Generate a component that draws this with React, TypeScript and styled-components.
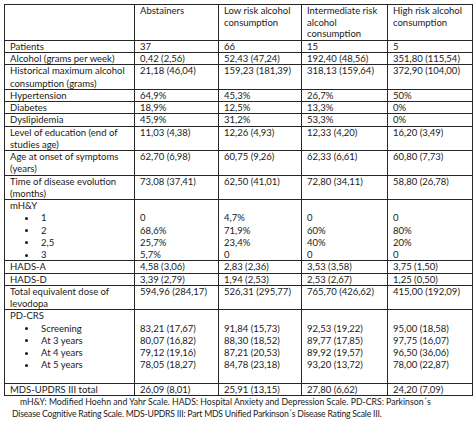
import React from "react";
import styled, { createGlobalStyle } from "styled-components";

type Row = {
  label: string;
  bullets?: string[];
  trailingBlank?: boolean;
  values: string[][];
};

const headers = [
  "Abstainers",
  "Low risk alcohol consumption",
  "Intermediate risk alcohol consumption",
  "High risk alcohol consumption",
];

const rows: Row[] = [
  { label: "Patients", values: [["37"], ["66"], ["15"], ["5"]] },
  {
    label: "Alcohol (grams per week)",
    values: [["0,42 (2,56)"], ["52,43 (47,24)"], ["192,40 (48,56)"], ["351,80 (115,54)"]],
  },
  {
    label: "Historical maximum alcohol consumption (grams)",
    values: [["21,18 (46,04)"], ["159,23 (181,39)"], ["318,13 (159,64)"], ["372,90 (104,00)"]],
  },
  { label: "Hypertension", values: [["64,9%"], ["45,3%"], ["26,7%"], ["50%"]] },
  { label: "Diabetes", values: [["18,9%"], ["12,5%"], ["13,3%"], ["0%"]] },
  { label: "Dyslipidemia", values: [["45,9%"], ["31,2%"], ["53,3%"], ["0%"]] },
  {
    label: "Level of education (end of studies age)",
    values: [["11,03 (4,38)"], ["12,26 (4,93)"], ["12,33 (4,20)"], ["16,20 (3,49)"]],
  },
  {
    label: "Age at onset of symptoms (years)",
    values: [["62,70 (6,98)"], ["60,75 (9,26)"], ["62,33 (6,61)"], ["60,80 (7,73)"]],
  },
  {
    label: "Time of disease evolution (months)",
    values: [["73,08 (37,41)"], ["62,50 (41,01)"], ["72,80 (34,11)"], ["58,80 (26,78)"]],
  },
  {
    label: "mH&Y",
    bullets: ["1", "2", "2,5", "3"],
    values: [
      ["", "0", "68,6%", "25,7%", "5,7%"],
      ["", "4,7%", "71,9%", "23,4%", "0"],
      ["", "0", "60%", "40%", "0"],
      ["", "0", "80%", "20%", "0"],
    ],
  },
  {
    label: "HADS-A",
    values: [["4,58 (3,06)"], ["2,83 (2,36)"], ["3,53 (3,58)"], ["3,75 (1,50)"]],
  },
  {
    label: "HADS-D",
    values: [["3,39 (2,79)"], ["1,94 (2,53)"], ["2,53 (2,67)"], ["1,25 (0,50)"]],
  },
  {
    label: "Total equivalent dose of levodopa",
    values: [["594,96 (284,17)"], ["526,31 (295,77)"], ["765,70 (426,62)"], ["415,00 (192,09)"]],
  },
  {
    label: "PD-CRS",
    bullets: ["Screening", "At 3 years", "At 4 years", "At 5 years"],
    trailingBlank: true,
    values: [
      ["", "83,21 (17,67)", "80,07 (16,82)", "79,12 (19,16)", "78,05 (18,27)", ""],
      ["", "91,84 (15,73)", "88,30 (18,52)", "87,21 (20,53)", "84,78 (23,18)", ""],
      ["", "92,53 (19,22)", "89,77 (17,85)", "89,92 (19,57)", "93,20 (13,72)", ""],
      ["", "95,00 (18,58)", "97,75 (16,07)", "96,50 (36,06)", "78,00 (22,87)", ""],
    ],
  },
  {
    label: "MDS-UPDRS III total",
    values: [["26,09 (8,01)"], ["25,91 (13,15)"], ["27,80 (6,62)"], ["24,20 (7,09)"]],
  },
];

const widths = [130, 84, 83, 86, 85];

const App = () => {
  return (
    <Page>
      <GlobalStyle />
      <Table>
        <colgroup>
          {widths.map((w, i) => (
            <Col key={i} $w={w} />
          ))}
        </colgroup>
        <tbody>
          <tr>
            <HeadCell />
            {headers.map((h) => (
              <HeadCell key={h}>{h}</HeadCell>
            ))}
          </tr>
          {rows.map((row) => (
            <tr key={row.label}>
              <Cell>
                <Label>{row.label}</Label>
                {row.bullets && (
                  <BulletList>
                    {row.bullets.map((b) => (
                      <Bullet key={b}>{b}</Bullet>
                    ))}
                  </BulletList>
                )}
                {row.trailingBlank && <Line>&nbsp;</Line>}
              </Cell>
              {row.values.map((lines, i) => (
                <Cell key={i}>
                  {lines.map((l, j) => (
                    <Line key={j}>{l || "\u00a0"}</Line>
                  ))}
                </Cell>
              ))}
            </tr>
          ))}
        </tbody>
      </Table>
      <Footnote>
        <NoteLine $indent={8} $spacing={0}>
          mH&amp;Y: Modified Hoehn and Yahr Scale. HADS: Hospital Anxiety and Depression Scale. PD-CRS: Parkinson´s
        </NoteLine>
        <NoteLine $indent={0} $spacing={-0.22}>
          Disease Cognitive Rating Scale. MDS-UPDRS III: Part MDS Unified Parkinson´s Disease Rating Scale III.
        </NoteLine>
      </Footnote>
    </Page>
  );
};

export default App;

const GlobalStyle = createGlobalStyle`
  body {
    margin: 0;
    background: #ffffff;
    font-family: Lato, "Open Sans", sans-serif;
    color: #1a1a1a;
  }
`;

const Page = styled.div`
  width: 474px;
  height: 422px;
  padding: 4px 0 0 4px;
  box-sizing: border-box;
  overflow: hidden;
`;

const Table = styled.table`
  border-collapse: collapse;
  table-layout: fixed;
  width: 468px;
  font-size: 9.5px;
  line-height: 12.25px;
`;

const Col = styled.col<{ $w: number }>`
  width: ${(p) => p.$w}px;
`;

const Cell = styled.td`
  border: 1px solid #262626;
  padding: 0 4px 0 5px;
  vertical-align: top;
  text-align: left;

  & > :last-child {
    margin-bottom: -1px;
  }
`;

const HeadCell = styled(Cell)`
  line-height: 11.6px;
`;

const Label = styled.div``;

const Line = styled.div`
  white-space: nowrap;
`;

const BulletList = styled.ul`
  list-style: none;
  margin: 0;
  padding: 0 0 0 31px;
`;

const Bullet = styled.li`
  position: relative;
  &::before {
    content: "";
    position: absolute;
    left: -16px;
    top: 4.7px;
    width: 3px;
    height: 3px;
    border-radius: 50%;
    background: #1a1a1a;
  }
`;

const Footnote = styled.div`
  padding-left: 8px;
  font-size: 8.7px;
  line-height: 12px;
`;

const NoteLine = styled.div<{ $indent: number; $spacing: number }>`
  white-space: nowrap;
  padding-left: ${(p) => p.$indent}px;
  letter-spacing: ${(p) => p.$spacing}px;
`;
